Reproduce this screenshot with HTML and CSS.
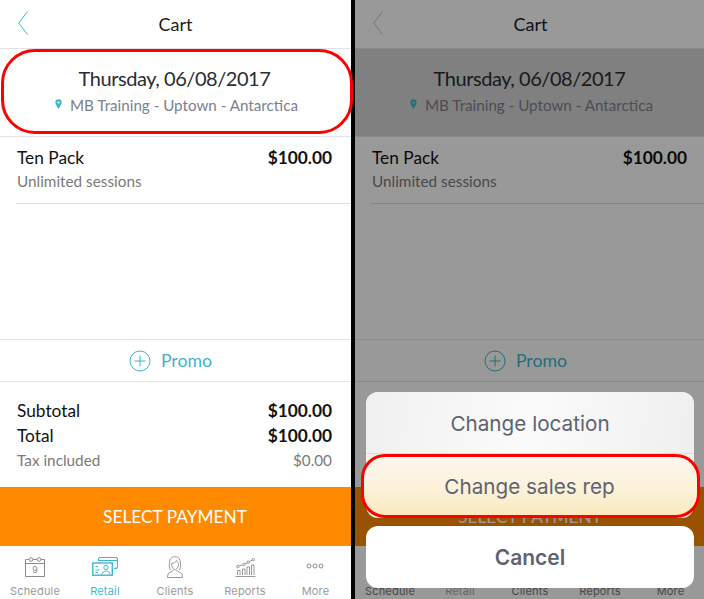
FILE: index.html
```html
<!DOCTYPE html>
<html lang="en">
<head>
<meta charset="utf-8">
<title>Cart</title>
<link rel="stylesheet" href="styles.css">
</head>
<body>
<svg class="defs" width="0" height="0" aria-hidden="true">
  <symbol id="i-back" viewBox="0 0 10 24"><path d="M9.500 .5 .8 12l8.700 11.500" fill="none" stroke="currentColor" stroke-width="1"/></symbol>
  <symbol id="i-pin" viewBox="0 0 8 11"><path fill-rule="evenodd" d="M4 0a3.600 3.600 0 0 1 3.600 3.700C7.600 6 5.300 9 4 11 2.700 9 .4 6 .4 3.700A3.600 3.600 0 0 1 4 0Zm0 2.500a1.200 1.200 0 1 0 0 2.400 1.200 1.200 0 0 0 0-2.400Z" fill="currentColor"/></symbol>
  <symbol id="i-plus" viewBox="0 0 22 22"><g fill="none" stroke="currentColor"><circle cx="11" cy="11" r="10"/><path d="M11 5.500v11M5.500 11h11"/></g></symbol>
  <symbol id="i-cal" viewBox="0 0 20 20"><g fill="none" stroke="currentColor"><path d="M4 2.500H.5v17h19v-17H16M8 2.500h4M.5 6.500h19"/><circle cx="6" cy="2.500" r="1.800"/><circle cx="14" cy="2.500" r="1.800"/></g></symbol>
  <symbol id="i-retail" viewBox="0 0 26 19"><g fill="none" stroke="currentColor"><path d="M6.500 4V2.500C6.500 1.300 7.500.5 8.500.5h15c1.200 0 2 .8 2 2v7c0 1.200-.8 2-2 2H22M6.500 3.500h19" stroke-width="1.100"/><rect x=".8" y="6" width="19.500" height="12.200" stroke-width="1.400"/><circle cx="14" cy="10.500" r="2.200"/><path d="M10 17.500c0-4.500 8-4.500 8 0M3.500 9.500h2.500M3.500 13h4M3.500 15.500h2.500"/></g></symbol>
  <symbol id="i-client" viewBox="0 0 16 22"><g fill="none" stroke="currentColor" stroke-width=".9"><path d="M3.500 14C1.500 11 2.200 3 4.500 1.800 6.500.2 10.500.2 12 2.500c1.800 2.500 2.300 8.500.5 11.500"/><path d="M4.500 7.500c2 0 4-1 5-3 .8 1.800 1.600 2.800 2.100 3-.3 3.500-1.600 6.200-3.600 6.200S4.800 11 4.500 7.500Z"/><path d="M6.300 14c0 1.500-4.200 2-5.300 3.800L.5 21.500h15l-.5-3.700C13.900 16 9.700 15.500 9.700 14"/></g></symbol>
  <symbol id="i-reports" viewBox="0 0 21 19"><g fill="none" stroke="currentColor" stroke-width=".9"><path d="M.5 18.500h20M2.500 17v-4.500h2.500V17M7.500 17v-6h2.500v6M12 17V9h2.500v8M16.500 17V7h2.500v10"/><circle cx="2.800" cy="8.500" r="1.200"/><circle cx="8.800" cy="6.500" r="1.200"/><circle cx="13.300" cy="4.200" r="1.200"/><circle cx="18.300" cy="1.600" r="1.200"/><path d="m4 8.100 3.600-1.200M10 5.900l2.200-1.100M14.400 3.600l2.900-1.500"/></g></symbol>
  <symbol id="i-more" viewBox="0 0 18 6"><g fill="none" stroke="currentColor"><circle cx="3" cy="3" r="2"/><circle cx="9" cy="3" r="2"/><circle cx="15" cy="3" r="2"/></g></symbol>
</svg>

<main class="stage">
  <section class="phone phone-left">
    <header class="nav">
      <svg class="back"><use href="#i-back"/></svg>
      <h1 class="nav-title">Cart</h1>
    </header>
    <div class="when">
      <div class="when-date">Thursday, 06/08/2017</div>
      <div class="when-place"><svg class="pin"><use href="#i-pin"/></svg>MB Training - Uptown - Antarctica</div>
    </div>
    <div class="items">
      <div class="item">
        <div class="line"><span>Ten Pack</span><strong class="money">$100.00</strong></div>
        <div class="item-note">Unlimited sessions</div>
      </div>
    </div>
    <div class="promo"><svg class="plus"><use href="#i-plus"/></svg>Promo</div>
    <div class="totals">
      <div class="line"><span>Subtotal</span><strong class="money">$100.00</strong></div>
      <div class="line"><span>Total</span><strong class="money">$100.00</strong></div>
      <div class="line line-tax"><span>Tax included</span><span>$0.00</span></div>
    </div>
    <div class="pay">SELECT PAYMENT</div>
    <nav class="tabs">
      <div class="tab"><svg class="tab-icon ic-cal"><use href="#i-cal"/></svg><span class="cal-num">9</span>Schedule</div>
      <div class="tab tab-on"><svg class="tab-icon ic-retail"><use href="#i-retail"/></svg>Retail</div>
      <div class="tab"><svg class="tab-icon ic-client"><use href="#i-client"/></svg>Clients</div>
      <div class="tab"><svg class="tab-icon ic-reports"><use href="#i-reports"/></svg>Reports</div>
      <div class="tab"><svg class="tab-icon ic-more"><use href="#i-more"/></svg>More</div>
    </nav>
    <div class="ring-date"></div>
  </section>

  <div class="divider"></div>

  <section class="phone phone-right">
    <header class="nav">
      <svg class="back"><use href="#i-back"/></svg>
      <h1 class="nav-title">Cart</h1>
    </header>
    <div class="when when-pressed">
      <div class="when-date">Thursday, 06/08/2017</div>
      <div class="when-place"><svg class="pin"><use href="#i-pin"/></svg>MB Training - Uptown - Antarctica</div>
    </div>
    <div class="items">
      <div class="item">
        <div class="line"><span>Ten Pack</span><strong class="money">$100.00</strong></div>
        <div class="item-note">Unlimited sessions</div>
      </div>
    </div>
    <div class="promo"><svg class="plus"><use href="#i-plus"/></svg>Promo</div>
    <div class="totals">
      <div class="line"><span>Subtotal</span><strong class="money">$100.00</strong></div>
      <div class="line"><span>Total</span><strong class="money">$100.00</strong></div>
      <div class="line line-tax"><span>Tax included</span><span>$0.00</span></div>
    </div>
    <div class="pay">SELECT PAYMENT</div>
    <nav class="tabs">
      <div class="tab"><svg class="tab-icon ic-cal"><use href="#i-cal"/></svg><span class="cal-num">9</span>Schedule</div>
      <div class="tab tab-on"><svg class="tab-icon ic-retail"><use href="#i-retail"/></svg>Retail</div>
      <div class="tab"><svg class="tab-icon ic-client"><use href="#i-client"/></svg>Clients</div>
      <div class="tab"><svg class="tab-icon ic-reports"><use href="#i-reports"/></svg>Reports</div>
      <div class="tab"><svg class="tab-icon ic-more"><use href="#i-more"/></svg>More</div>
    </nav>
    <div class="scrim"></div>
    <div class="sheet">
      <div class="sheet-group">
        <div class="sheet-btn">Change location</div>
        <div class="sheet-btn-hot">Change sales rep</div>
      </div>
      <div class="sheet-cancel">Cancel</div>
    </div>
  </section>
</main>
</body>
</html>
```

FILE: styles.css
```css
* { box-sizing: border-box; }
html, body { margin: 0; height: 100%; overflow: hidden; background: #fff; }
.defs { position: absolute; }
.stage { display: flex; width: 704px; height: 599px; overflow: hidden; font-family: "Lato", sans-serif; }

.phone { position: relative; flex: none; width: 351px; height: 599px; display: flex; flex-direction: column; background: #fff; color: #111; }
.phone-left { z-index: 1; }
.divider { flex: none; width: 4px; background: #000; box-shadow: -2px 0 3px rgba(0,0,0,.35); }

.nav { height: 49px; flex: none; display: flex; align-items: center; justify-content: center; position: relative; border-bottom: 1px solid #dfe1e6; }
.nav-title { margin: 0; font-size: 18px; font-weight: 400; color: #1c1c1c; }
.back { position: absolute; left: 18px; top: 11px; width: 10px; height: 24px; color: #3fb8cf; }
.phone-right .back { color: #c6c6c6; }

.when { height: 88px; flex: none; display: flex; flex-direction: column; align-items: center; padding-top: 17px; padding-right: 2px; border-bottom: 1px solid #e3e4e8; }
.when-pressed { background: #d6d6d6; }
.when-date { font-size: 20px; line-height: 24px; letter-spacing: -.45px; color: #2a2c33; }
.when-place { margin-top: 5px; padding-left: 4px; font-size: 15.200px; line-height: 20px; color: #7d818c; display: flex; align-items: center; }
.pin { width: 7px; height: 10px; margin-right: 8px; margin-top: -2px; color: #3fb8cf; }

.items { flex: 1; }
.item { margin-left: 16px; padding: 10px 19px 12px 1px; border-bottom: 1px solid #dcdde1; }
.line { display: flex; justify-content: space-between; font-size: 17.300px; line-height: 22px; color: #111; }
.money { font-weight: 700; }
.item-note { margin-top: 2px; font-size: 15.300px; line-height: 20px; color: #7a7a7a; }

.promo { height: 43px; flex: none; display: flex; align-items: center; justify-content: center; gap: 10px; padding-right: 10px; border-top: 1px solid #e4e4e4; border-bottom: 1px solid #e4e4e4; font-size: 17.700px; color: #3fb5cb; }
.plus { width: 22px; height: 22px; }

.totals { height: 105px; flex: none; padding: 17.500px 19px 0 17px; display: flex; flex-direction: column; gap: 3.500px; }
.line-tax { margin-top: -.5px; font-size: 15.300px; line-height: 20px; color: #7a7a7a; }

.pay { height: 59px; flex: none; display: flex; align-items: center; justify-content: center; padding-right: 1px; background: #ff8a00; color: #fff; font-size: 17.300px; }

.tabs { height: 53px; flex: none; display: grid; grid-template-columns: 70px 70px 70px 70px 71px; background: #fff; }
.tab { position: relative; display: flex; justify-content: center; padding-top: 38px; font-family: "Inter", sans-serif; font-size: 11px; line-height: 14px; letter-spacing: .2px; color: #9a9a9a; }
.tab-on { color: #3fb8cf; }
.tab-icon { position: absolute; color: #8c8c8c; }
.tab-on .tab-icon { color: #3fb8cf; }
.phone-right .tab { color: #777; }
.phone-right .tab-on { color: #aaa; }
.ic-cal { left: 25px; top: 11px; width: 20px; height: 20px; }
.ic-retail { left: 22px; top: 11px; width: 26px; height: 19px; }
.ic-client { left: 27px; top: 10px; width: 16px; height: 22px; }
.ic-reports { left: 25px; top: 12px; width: 21px; height: 19px; }
.ic-more { left: 26px; top: 17px; width: 18px; height: 6px; }
.cal-num { position: absolute; left: 25px; top: 18px; width: 20px; text-align: center; font-size: 9px; line-height: 12px; color: #8c8c8c; letter-spacing: 0; }

.scrim { position: absolute; inset: 0; background: rgba(0,0,0,.4); }

.sheet { position: absolute; left: 11px; top: 392px; width: 328px; display: flex; flex-direction: column; gap: 8px; font-family: "Inter", sans-serif; color: #5f6370; }
.sheet-group { border-radius: 12px; background: #f6f2e6; }
.sheet-btn { height: 62px; display: flex; align-items: center; justify-content: center; padding-top: 2px; border-radius: 12px 12px 0 0; border-bottom: 1px solid #ddd; font-size: 20.700px; background: linear-gradient(100deg, #f0f0f0, #fbfbfb 50%, #efefef); }
.sheet-btn-hot { height: 64px; margin: 0 -6px 0 -5px; display: flex; align-items: center; justify-content: center; padding-right: 2px; border: 3px solid #f00; border-radius: 24px; font-size: 20.700px; background: linear-gradient(#fbf7ef, #fbf1d8 60%, #fae9bd); }
.sheet-cancel { height: 62px; display: flex; align-items: center; justify-content: center; border-radius: 12px; background: #fff; font-size: 21px; font-weight: 600; }

.ring-date { position: absolute; left: 1px; top: 49px; width: 352px; height: 85px; border: 3px solid #f00; border-radius: 34px; z-index: 2; }
```
